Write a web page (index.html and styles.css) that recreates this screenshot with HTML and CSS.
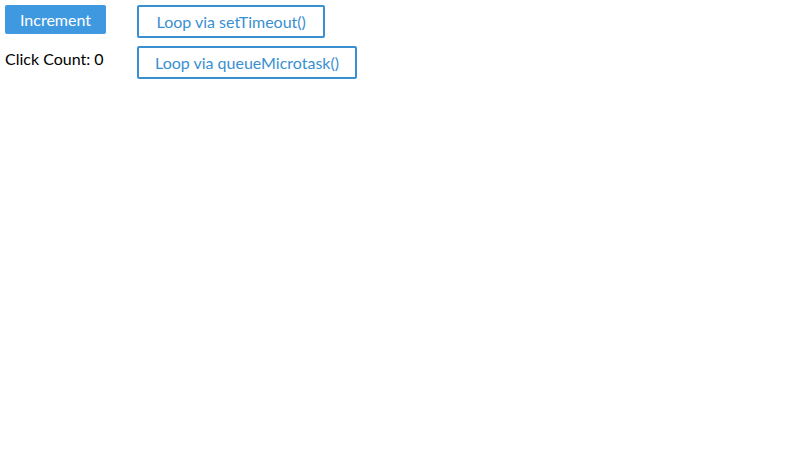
FILE: index.html
```html
<!DOCTYPE html>
<html>
<head>
<meta charset="utf-8">
<link rel="stylesheet" href="styles.css">
</head>
<body>
<div class="app">
  <div class="left">
    <button class="btn-primary">Increment</button>
    <div class="count">Click Count: 0</div>
  </div>
  <div class="right">
    <button class="btn-outline btn-wide">Loop via setTimeout()</button>
    <button class="btn-outline">Loop via queueMicrotask()</button>
  </div>
</div>
</body>
</html>
```
FILE: styles.css
```css
html, body {
  margin: 0;
  padding: 0;
  background: #ffffff;
}
body {
  font-family: "Lato", "Noto Sans", sans-serif;
  font-size: 16px;
  color: #000;
}
.app {
  display: flex;
  padding: 5px;
  gap: 31px;
  align-items: flex-start;
}
.left {
  display: flex;
  flex-direction: column;
  align-items: flex-start;
}
.btn-primary {
  font-family: inherit;
  font-size: 16px;
  background: #3f99e0;
  color: #fff;
  border: none;
  border-radius: 2px;
  width: 101px;
  height: 29px;
  padding: 0;
  margin: 0;
}
.count {
  margin-top: 15px;
  line-height: 20px;
}
.right {
  display: flex;
  flex-direction: column;
  align-items: flex-start;
  gap: 8px;
}
.btn-outline {
  font-family: inherit;
  font-size: 16px;
  background: #fff;
  color: #3a8fd0;
  border: 2px solid #3a8fd0;
  border-radius: 2px;
  height: 33px;
  padding: 0 16px;
  margin: 0;
}
.btn-wide {
  padding: 0 17.5px;
}
```
